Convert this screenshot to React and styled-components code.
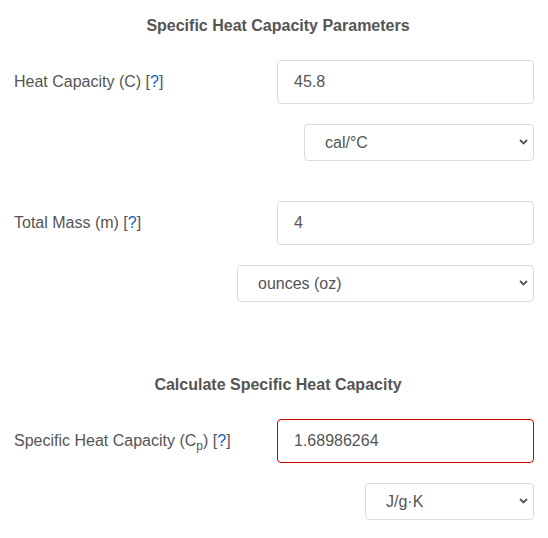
import React from "react";
import styled, { createGlobalStyle } from "styled-components";

const Global = createGlobalStyle`
  html, body { margin: 0; padding: 0; background: #fff; }
  body { font-family: "Liberation Sans", Arial, sans-serif; color: #555; }
`;

const Page = styled.div`
  width: 548px;
  box-sizing: border-box;
  padding: 16px 14px 0 14px;
`;

const Heading = styled.div`
  font-size: 16px;
  line-height: 20px;
  font-weight: bold;
  color: #555;
  text-align: center;
  padding-left: 8px;
  margin-top: ${(p) => p.$top || 0}px;
  margin-bottom: 24px;
`;

const Field = styled.div`
  display: flex;
  flex-direction: column;
  align-items: flex-end;
  margin-bottom: ${(p) => p.$after || 0}px;
`;

const Row = styled.div`
  display: flex;
  align-items: center;
  justify-content: space-between;
  width: 100%;
`;

const Label = styled.label`
  font-size: 16px;
  line-height: 20px;
  color: #555;
`;

const Help = styled.span`
  color: #555;
  & > a {
    color: #0b62c4;
    text-decoration: none;
  }
`;

const Input = styled.input`
  box-sizing: border-box;
  width: 257px;
  height: 44px;
  padding: 0 16px;
  font-family: "Liberation Sans", Arial, sans-serif;
  font-size: 16px;
  color: #555;
  border: 1px solid ${(p) => (p.$error ? "#cc0000" : "#dcdcdc")};
  border-radius: 4px;
  background: #fff;
  outline: none;
`;

const SelectWrap = styled.div`
  position: relative;
  margin-top: 20px;
  width: ${(p) => p.$w}px;
  height: 37px;
`;

const Select = styled.select`
  box-sizing: border-box;
  width: 100%;
  height: 37px;
  padding: 0 24px 0 20px;
  font-family: "Liberation Sans", Arial, sans-serif;
  font-size: 16px;
  color: #555;
  border: 1px solid #dcdcdc;
  border-radius: 4px;
  background: #fff;
  appearance: none;
  -webkit-appearance: none;
  outline: none;
`;

const Chevron = styled.svg`
  position: absolute;
  right: 6px;
  top: 15px;
  width: 9px;
  height: 6px;
  pointer-events: none;
`;

function UnitSelect({ width, value, options }) {
  return (
    <SelectWrap $w={width}>
      <Select defaultValue={value}>
        {options.map((o) => (
          <option key={o}>{o}</option>
        ))}
      </Select>
      <Chevron viewBox="0 0 9 6">
        <path d="M1 1 L4.5 4.5 L8 1" fill="none" stroke="#555" strokeWidth="1.8" />
      </Chevron>
    </SelectWrap>
  );
}

function HelpMark() {
  return (
    <Help>
      [<a href="#">?</a>]
    </Help>
  );
}

export default function App() {
  return (
    <>
      <Global />
      <Page>
        <Heading>Specific Heat Capacity Parameters</Heading>
        <Field $after={40}>
          <Row>
            <Label>
              Heat Capacity (C) <HelpMark />
            </Label>
            <Input defaultValue="45.8" />
          </Row>
          <UnitSelect width={230} value="cal/°C" options={["J/°C", "J/K", "kJ/K", "cal/°C", "kcal/°C"]} />
        </Field>
        <Field>
          <Row>
            <Label>
              Total Mass (m) <HelpMark />
            </Label>
            <Input defaultValue="4" />
          </Row>
          <UnitSelect width={297} value="ounces (oz)" options={["grams (g)", "kilograms (kg)", "ounces (oz)", "pounds (lbs)"]} />
        </Field>
        <Heading $top={73}>Calculate Specific Heat Capacity</Heading>
        <Field>
          <Row>
            <Label>
              Specific Heat Capacity (C<sub style={{ fontSize: "12px", lineHeight: 0 }}>p</sub>) <HelpMark />
            </Label>
            <Input $error defaultValue="1.68986264" />
          </Row>
          <UnitSelect width={169} value="J/g·K" options={["J/g·K", "J/kg·K", "cal/g·°C"]} />
        </Field>
      </Page>
    </>
  );
}
